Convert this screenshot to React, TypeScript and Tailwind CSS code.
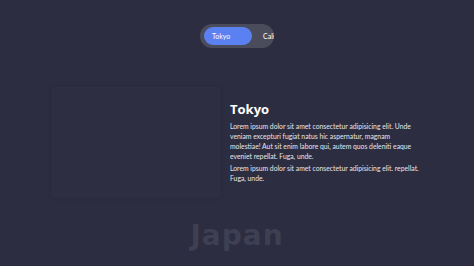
import React from "react";

export default function App() {
  return (
    <div className="w-[474px] h-[266px] overflow-hidden bg-[#2c2d40] flex flex-col items-center font-['Lato','Open_Sans',sans-serif]">
      <div className="mt-[24px] w-[74px] h-[24px] rounded-full bg-[#4a4b5b] overflow-hidden flex items-center pl-[4px] gap-[11px] shrink-0">
        <div className="w-[48px] h-[18px] shrink-0 rounded-full bg-[#5b80f2] flex items-center pl-[8px] text-[7px] text-white">Tokyo</div>
        <div className="shrink-0 text-[7px] text-white">California</div>
      </div>
      <div className="mt-[39px] flex w-full pl-[52px] gap-[10px]">
        <div className="w-[168px] h-[111px] shrink-0 bg-[#2d2e42] shadow-[0_0_5px_rgba(0,0,0,0.1)]"></div>
        <div className="w-[191px] pt-[14px] text-white">
          <div className="text-[13px] font-bold leading-[16px] font-['Open_Sans',sans-serif]">Tokyo</div>
          <p className="mt-[4px] text-[6.8px] leading-[10px] text-[#e6e6ee]">
            Lorem ipsum dolor sit amet consectetur adipisicing elit. Unde veniam excepturi fugiat natus hic aspernatur, magnam molestiae! Aut sit enim labore qui, autem quos deleniti eaque eveniet repellat. Fuga, unde.
          </p>
          <p className="mt-[2px] text-[6.8px] leading-[10px] text-[#e6e6ee]">
            Lorem ipsum dolor sit amet consectetur adipisicing elit. repellat. Fuga, unde.
          </p>
        </div>
      </div>
      <div className="mt-[20px] text-[28px] tracking-[1px] font-bold leading-[36px] text-[#3e3f52] font-['DejaVu_Sans',sans-serif]">Japan</div>
    </div>
  );
}
